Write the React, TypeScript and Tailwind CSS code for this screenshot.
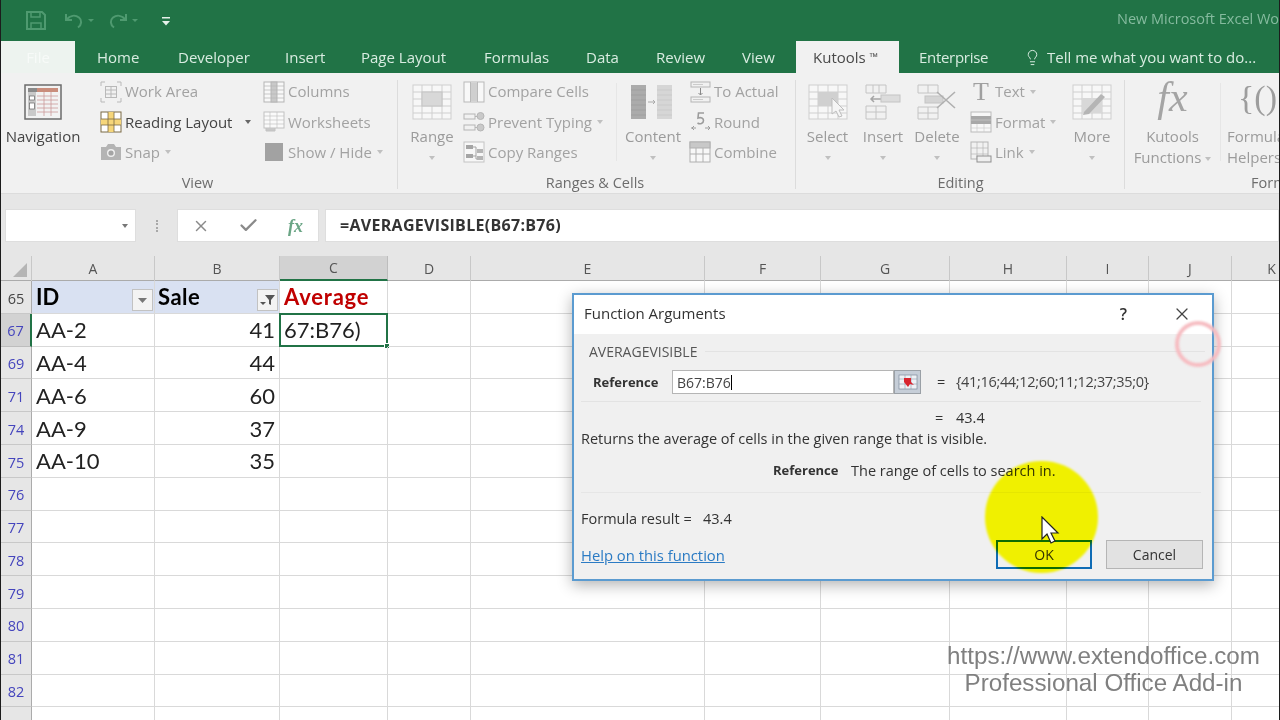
import type { ReactNode } from 'react';
import { Lightbulb, X, Check } from 'lucide-react';

const ui = { fontFamily: '"Open Sans", "Liberation Sans", sans-serif' };

const BigGrid = ({ children }: { children?: ReactNode }) => (
  <svg width="40" height="36" viewBox="0 0 40 36" fill="none" stroke="#cfcfcf" strokeWidth="1">
    <rect x="1" y="1" width="38" height="34" fill="#f7f7f7" />
    {[8, 15, 22, 29].map((y) => <line key={y} x1="1" x2="39" y1={y} y2={y} />)}
    {[10, 20, 30].map((x) => <line key={x} x1={x} x2={x} y1="1" y2="35" />)}
    {children}
  </svg>
);

const NavIcon = () => (
  <svg width="38" height="36" viewBox="0 0 38 36" fill="none">
    <rect x="1" y="1" width="36" height="34" fill="#f2f2f2" stroke="#6b6b6b" strokeWidth="1.5" />
    <rect x="4" y="4" width="8" height="28" fill="#c9c9c9" />
    <rect x="4" y="4" width="30" height="4" fill="#8a8a8a" />
    <rect x="13" y="4" width="21" height="4" fill="#c98d7c" />
    <rect x="5.5" y="12" width="5" height="4" fill="#fff" stroke="#666" strokeWidth=".7" />
    <rect x="5.5" y="19" width="5" height="6" fill="#fff" stroke="#666" strokeWidth=".7" />
    <g stroke="#c99" strokeWidth=".8">
      {[12, 16, 20, 24, 28].map((y) => <line key={y} x1="13" x2="34" y1={y} y2={y} />)}
      {[20, 27].map((x) => <line key={x} x1={x} x2={x} y1="8" y2="32" />)}
    </g>
  </svg>
);

const WorkAreaIcon = () => (
  <svg width="22" height="22" viewBox="0 0 22 22" fill="none" stroke="#b9b9b9">
    <path d="M1 5V1h4M17 1h4v4M1 17v4h4M21 17v4h-4" />
    <rect x="5.5" y="5.5" width="11" height="11" />
    <path d="M5.500 9h11M5.500 13h11M11 5.500v11" />
  </svg>
);

const ReadingIcon = () => (
  <svg width="22" height="22" viewBox="0 0 22 22" fill="none">
    <rect x="1" y="1" width="20" height="20" fill="#fff" stroke="#7b6a45" />
    <rect x="8" y="1" width="6" height="20" fill="#f6d67a" />
    <rect x="1" y="8" width="20" height="6" fill="#f6d67a" />
    <path d="M1 8h20M1 14h20M8 1v20M14 1v20" stroke="#7b6a45" strokeWidth=".8" />
  </svg>
);

const CameraIcon = () => (
  <svg width="22" height="18" viewBox="0 0 22 18">
    <path d="M1 4h5l2-3h6l2 3h5v13H1z" fill="#b4b4b4" />
    <circle cx="11" cy="10" r="4" fill="#f0f0f0" />
    <circle cx="11" cy="10" r="2.6" fill="#a4a4a4" />
  </svg>
);

const ColumnsIcon = () => (
  <svg width="22" height="22" viewBox="0 0 22 22" fill="none" stroke="#b5b5b5">
    <rect x="1" y="1" width="20" height="20" fill="#f8f8f8" />
    <rect x="8" y="1" width="6" height="20" fill="#c9c9c9" />
    <path d="M1 5h20M1 9h20M1 13h20M1 17h20" strokeWidth=".7" />
  </svg>
);

const WorksheetIcon = () => (
  <svg width="22" height="22" viewBox="0 0 22 22" fill="none" stroke="#c2c2c2">
    <rect x="1" y="1" width="20" height="16" fill="#fafafa" />
    <path d="M1 5h20M1 9h20M1 13h20M7 1v16M14 1v16" strokeWidth=".7" />
    <path d="M3 17v3h9v-3" fill="#c8c8c8" />
  </svg>
);

const CompareIcon = () => (
  <svg width="22" height="22" viewBox="0 0 22 22" fill="none" stroke="#b9b9b9">
    <rect x="1" y="1" width="20" height="20" fill="#f8f8f8" />
    <path d="M7.500 1v20M14.500 1v20" />
    <rect x="8" y="1.5" width="6" height="19" fill="#cfcfcf" stroke="none" />
  </svg>
);

const PreventIcon = () => (
  <svg width="22" height="22" viewBox="0 0 22 22" fill="none" stroke="#b5b5b5" strokeWidth="1">
    <rect x="1" y="3" width="11" height="5" />
    <rect x="1" y="14" width="11" height="5" />
    <path d="M12 5.500h4M12 16.500h4" />
    <circle cx="17.5" cy="5" r="3.5" fill="#c9c9c9" />
    <circle cx="17.5" cy="16.5" r="3.5" fill="#c9c9c9" />
  </svg>
);

const CopyIcon = () => (
  <svg width="22" height="22" viewBox="0 0 22 22" fill="none">
    <rect x="1" y="1" width="20" height="20" fill="#f7f7f7" stroke="#c4c4c4" />
    <rect x="3" y="4" width="7" height="4" fill="#a5a5a5" />
    <rect x="3" y="13" width="7" height="4" fill="#a5a5a5" />
    <rect x="14" y="8" width="6" height="4" fill="#b5b5b5" />
    <rect x="14" y="15" width="6" height="4" fill="#b5b5b5" />
    <path d="M10 6h3v12h1M10 15h3" stroke="#a5a5a5" />
  </svg>
);

const ContentIcon = () => (
  <svg width="44" height="36" viewBox="0 0 44 36">
    <rect x="0" y="1" width="15" height="34" fill="#ababab" />
    <rect x="26" y="1" width="15" height="34" fill="#d6d6d6" />
    <g stroke="#989898" strokeWidth=".6">
      {[6, 11, 16, 21, 26, 31].map((y) => <line key={y} x1="0" x2="15" y1={y} y2={y} />)}
    </g>
    <g stroke="#c2c2c2" strokeWidth=".6">
      {[6, 11, 16, 21, 26, 31].map((y) => <line key={y} x1="26" x2="41" y1={y} y2={y} />)}
    </g>
    <path d="M17 18h7m-2-2 2 2-2 2" stroke="#aaa" fill="none" />
  </svg>
);

const ToActualIcon = () => (
  <svg width="21" height="22" viewBox="0 0 21 22" fill="none" stroke="#b5b5b5">
    <rect x="1" y="1" width="19" height="5" />
    <rect x="1" y="16" width="19" height="5" />
    <path d="M10.500 7v7m-2-2 2 2 2-2" stroke="#888" />
    <path d="M3 3.500h10M3 18.500h10" stroke="#ccc" />
  </svg>
);

const RoundIcon = () => (
  <svg width="21" height="22" viewBox="0 0 21 22" fill="none" stroke="#9c9c9c">
    <path d="M1 17h5m-2-2-2 2 2 2M15 17h5m-2-2 2 2-2 2" />
    <path d="M14 2H8.500L8 7c3-1 5.500 0 5.500 2.500 0 3-3.500 4-6 2.500" strokeWidth="1.6" />
  </svg>
);

const CombineIcon = () => (
  <svg width="22" height="22" viewBox="0 0 22 22" fill="none" stroke="#b0b0b0">
    <rect x="1" y="1" width="20" height="20" fill="#f8f8f8" />
    <rect x="1" y="1" width="20" height="6" fill="#c8c8c8" />
    <path d="M1 13h20M7 7v14M14 7v14" />
  </svg>
);

const SelectIcon = () => (
  <BigGrid>
    <rect x="10" y="8" width="20" height="14" fill="#d0d0d0" stroke="none" />
    <path d="M24 14v16l4-3 3 6 3-1-3-6h5z" fill="#f5f5f5" stroke="#bdbdbd" />
  </BigGrid>
);

const RangeIcon = () => (
  <BigGrid>
    <rect x="10" y="8" width="20" height="14" fill="#d8d8d8" stroke="#c4c4c4" />
  </BigGrid>
);

const InsertIcon = () => (
  <svg width="36" height="36" viewBox="0 0 36 36" fill="none" stroke="#c4c4c4">
    <path d="M1 1h20v8H1zM8 1v8M14 1v8" />
    <path d="M1 22h20v13H1zM1 28h20M11 22v13" />
    <path d="M16 15H6m3-3-3 3 3 3" stroke="#a5a5a5" strokeWidth="1.5" />
    <rect x="16" y="11" width="19" height="7" fill="#dcdcdc" />
  </svg>
);

const DeleteIcon = () => (
  <svg width="40" height="36" viewBox="0 0 40 36" fill="none" stroke="#c4c4c4">
    <path d="M1 1h20v8H1zM11 1v8" />
    <rect x="8" y="12" width="18" height="7" fill="#d4d4d4" />
    <path d="M1 23h20v12H1zM1 29h20M11 23v12" />
    <path d="M20 24 38 8M20 8l18 16" stroke="#b0b0b0" strokeWidth="1.6" />
  </svg>
);

const FormatIcon = () => (
  <svg width="22" height="22" viewBox="0 0 22 22">
    <rect x="1" y="1" width="20" height="20" fill="#f7f7f7" stroke="#bbb" />
    <rect x="1" y="5" width="20" height="8" fill="#a8a8a8" />
    <path d="M1 9h20M1 17h20M7 13v8M14 13v8" stroke="#ccc" strokeWidth=".7" />
  </svg>
);

const LinkIcon = () => (
  <svg width="22" height="22" viewBox="0 0 22 22" fill="none" stroke="#b5b5b5">
    <rect x="1" y="1" width="17" height="17" />
    <path d="M1 7h17M1 13h17M7 1v17M13 1v17" strokeWidth=".7" />
    <rect x="7" y="15" width="14" height="6" fill="#efefef" stroke="#8f8f8f" />
  </svg>
);

const MoreIcon = () => (
  <BigGrid>
    <rect x="10" y="14" width="20" height="15" fill="#d8d8d8" stroke="none" />
    <path d="M12 28 29 10l4 3-16 17-6 1z" fill="#b5b5b5" stroke="none" />
  </BigGrid>
);

const Caret = ({ tone = '#c0c0c0' }: { tone?: string }) => (
  <svg width="6" height="4" viewBox="0 0 6 4" className="inline-block shrink-0"><path d="M0 0h6L3 4z" fill={tone} /></svg>
);

const BigBtn = ({ icon, label, caret, width, tone = 'text-[#9b9b9b]' }: { icon: ReactNode; label: ReactNode; caret?: boolean; width: string; tone?: string }) => (
  <div className={`${width} flex flex-col items-center shrink-0 pt-[10px] text-[15px] leading-[20px] ${tone}`}>
    <div className="h-[37px] flex items-center justify-center">{icon}</div>
    <div className="mt-[6px] text-center whitespace-nowrap">{label}</div>
    {caret && <div className="mt-[8px] flex h-[8px] items-center"><Caret /></div>}
  </div>
);

const SmallBtn = ({ icon, label, caret, dark, caretGap = 'ml-[2px]' }: { icon: ReactNode; label: string; caret?: boolean; dark?: boolean; caretGap?: string }) => (
  <div className={`h-[30.3px] flex items-center gap-[3px] text-[15px] whitespace-nowrap ${dark ? 'text-[#444]' : 'text-[#a2a2a2]'}`}>
    <div className="w-[22px] flex justify-center shrink-0">{icon}</div>
    <span>{label}</span>
    {caret && <span className={`${caretGap} flex`}><Caret tone={dark ? '#666' : '#c0c0c0'} /></span>}
  </div>
);

const SmallCol = ({ width, children }: { width: string; children: ReactNode }) => (
  <div className={`${width} shrink-0 pt-[3.5px]`}>{children}</div>
);

const SubSep = () => <div className="w-px h-[78px] mt-[10px] bg-[#e6e6e6] shrink-0" />;

const Group = ({ width, label, children, labelPad = 'pr-[4px]' }: { width: string; label: string; children: ReactNode; labelPad?: string }) => (
  <div className={`${width} shrink-0 h-[120px] flex flex-col relative`}>
    <div className="h-[100px] flex">{children}</div>
    <div className={`h-[20px] ${labelPad} text-center text-[14.5px] leading-[20px] text-[#6d6d6d]`}>{label}</div>
    <div className="absolute right-0 top-[7px] bottom-[4px] w-px bg-[#dcdcdc]" />
  </div>
);

const tabs = [
  { name: 'Home', w: 'w-[81px]' },
  { name: 'Developer', w: 'w-[107px]' },
  { name: 'Insert', w: 'w-[76px]' },
  { name: 'Page Layout', w: 'w-[123px]' },
  { name: 'Formulas', w: 'w-[102px]' },
  { name: 'Data', w: 'w-[70px]' },
  { name: 'Review', w: 'w-[86px]' },
  { name: 'View', w: 'w-[54px]' },
];

const columns = ['A', 'B', 'C', 'D', 'E', 'F', 'G', 'H', 'I', 'J', 'K'];
const gridCols = 'grid grid-cols-[31px_123px_125px_108px_83px_234px_116px_129px_117px_82px_83px_80px]';

const rows = [
  { n: '65', id: 'ID', sale: '', avg: 'Average' },
  { n: '67', id: 'AA-2', sale: '41', avg: '67:B76)' },
  { n: '69', id: 'AA-4', sale: '44' },
  { n: '71', id: 'AA-6', sale: '60' },
  { n: '74', id: 'AA-9', sale: '37' },
  { n: '75', id: 'AA-10', sale: '35' },
  { n: '76' }, { n: '77' }, { n: '78' }, { n: '79' }, { n: '80' }, { n: '81' }, { n: '82' }, { n: '83' },
] as { n: string; id?: string; sale?: string; avg?: string }[];

const FilterBtn = ({ active }: { active?: boolean }) => (
  <div className="absolute right-[1px] top-[8px] w-[21px] h-[22px] bg-[#f3f3f3] border border-[#c2c2c2] flex items-center justify-center">
    {active ? (
      <svg width="15" height="12" viewBox="0 0 15 12"><path d="M5 1h10L11 6v5l-2-1V6z" fill="#555" /><path d="M0 8h6L3 11z" fill="#555" /></svg>
    ) : (
      <svg width="9" height="5" viewBox="0 0 9 5"><path d="M0 0h9L4.500 5z" fill="#777" /></svg>
    )}
  </div>
);

const RefButton = () => (
  <div className="w-[27px] h-[24px] bg-[#c6ced8] border border-[#9aa0a6] flex items-center justify-center">
    <svg width="20" height="16" viewBox="0 0 20 16">
      <rect x="1" y="1" width="18" height="14" fill="#eef1f5" stroke="#7d8a9c" strokeWidth=".7" />
      <path d="M1 5h18M1 10h18M7 1v14M13 1v14" stroke="#8f9bad" strokeWidth=".6" />
      <path d="M6 4h7v4l3 3-4-1-2 3-4-5z" fill="#d9252f" />
    </svg>
  </div>
);

export default function App() {
  return (
    <div className="relative w-[1280px] h-[720px] overflow-hidden bg-white border-x border-[#1c1c1c] blur-[0.4px]" style={ui}>
      {/* title bar */}
      <div className="h-[41px] bg-[#217346] flex items-center">
        <svg width="20" height="19" viewBox="0 0 20 19" fill="none" stroke="#4f9a70" strokeWidth="2" className="ml-[25px]">
          <path d="M1 1h15l3 3v14H1z" />
          <path d="M5 1v5h9V1M5 18v-6h10v6" strokeWidth="1.5" />
        </svg>
        <svg width="18" height="16" viewBox="0 0 18 16" fill="none" stroke="#4f9a70" strokeWidth="2" className="ml-[19px]">
          <path d="M1 1v6h6M1.500 6.500C5 2.500 10 1.500 14 4.500c3 2.500 3 7-1 10" />
        </svg>
        <svg width="6" height="3" viewBox="0 0 6 3" className="ml-[5px]"><path d="M0 0h6L3 3z" fill="#4f9a70" /></svg>
        <svg width="18" height="16" viewBox="0 0 18 16" fill="none" stroke="#4f9a70" strokeWidth="2" className="ml-[15px]">
          <path d="M17 1v6h-6M16.500 6.500C13 2.500 8 1.500 4 4.500c-3 2.500-3 7 1 10" />
        </svg>
        <svg width="6" height="3" viewBox="0 0 6 3" className="ml-[5px]"><path d="M0 0h6L3 3z" fill="#4f9a70" /></svg>
        <svg width="8" height="10" viewBox="0 0 8 10" className="ml-[24px]">
          <path d="M0 1h8v1.500H0z" fill="#e6f1ea" />
          <path d="M0 5h8L4 9.500z" fill="#e6f1ea" />
        </svg>
        <span className="absolute left-[1116px] top-[8px] whitespace-nowrap text-[14.5px] text-[#86bb9f]">New Microsoft Excel Workbook</span>
      </div>

      {/* tabs */}
      <div className="h-[32px] bg-[#217346] flex items-end text-[15px] text-[#d9ece1]">
        <div className="w-[74px] h-[32px] bg-[#edf3ef] flex items-center justify-center text-[#f7faf8] shrink-0 mr-[22px]">File</div>
        {tabs.map((t) => (
          <div key={t.name} className={`${t.w} h-[32px] leading-[32px] shrink-0 whitespace-nowrap`}>{t.name}</div>
        ))}
        <div className="w-[103px] h-[32px] bg-[#f1f1f1] pl-[17px] leading-[32px] text-[#4a4a4a] shrink-0 whitespace-nowrap">Kutools <span className="text-[11px] align-top">™</span></div>
        <div className="ml-[20px] w-[105px] leading-[32px] shrink-0 tracking-[-0.3px]">Enterprise</div>
        <div className="h-[32px] flex items-center gap-[6px] whitespace-nowrap">
          <Lightbulb size={17} strokeWidth={1.4} />
          <span>Tell me what you want to do...</span>
        </div>
      </div>

      {/* ribbon */}
      <div className="h-[120px] bg-[#f1f1f1] flex overflow-hidden">
        <Group width="w-[397px]" label="View">
          <div className="pl-[4px] shrink-0 flex">
            <BigBtn width="w-[76px]" icon={<NavIcon />} label="Navigation" tone="text-[#444]" />
          </div>
          <div className="w-[19px] shrink-0" />
          <SmallCol width="w-[163px]">
            <SmallBtn icon={<WorkAreaIcon />} label="Work Area" />
            <SmallBtn icon={<ReadingIcon />} label="Reading Layout" dark caret caretGap="ml-[10px]" />
            <SmallBtn icon={<CameraIcon />} label="Snap" caret />
          </SmallCol>
          <SmallCol width="w-[130px]">
            <SmallBtn icon={<ColumnsIcon />} label="Columns" />
            <SmallBtn icon={<WorksheetIcon />} label="Worksheets" />
            <SmallBtn icon={<div className="w-[18px] h-[18px] bg-[#a2a2a2]" />} label="Show / Hide" caret />
          </SmallCol>
        </Group>

        <Group width="w-[398px]" label="Ranges & Cells">
          <div className="pl-[4px] shrink-0 flex">
            <BigBtn width="w-[60px]" icon={<RangeIcon />} label="Range" caret />
          </div>
          <div className="w-px shrink-0" />
          <SmallCol width="w-[153px]">
            <SmallBtn icon={<CompareIcon />} label="Compare Cells" />
            <SmallBtn icon={<PreventIcon />} label="Prevent Typing" caret />
            <SmallBtn icon={<CopyIcon />} label="Copy Ranges" />
          </SmallCol>
          <SubSep />
          <BigBtn width="w-[72px]" icon={<ContentIcon />} label="Content" caret />
          <SmallCol width="w-[100px]">
            <SmallBtn icon={<ToActualIcon />} label="To Actual" />
            <SmallBtn icon={<RoundIcon />} label="Round" />
            <SmallBtn icon={<CombineIcon />} label="Combine" />
          </SmallCol>
        </Group>

        <Group width="w-[329px]" label="Editing" labelPad="pr-0">
          <div className="pl-[4px] shrink-0 flex">
            <BigBtn width="w-[55px]" icon={<SelectIcon />} label="Select" caret />
          </div>
          <BigBtn width="w-[56px]" icon={<InsertIcon />} label="Insert" caret />
          <BigBtn width="w-[52px]" icon={<DeleteIcon />} label="Delete" caret />
          <div className="w-[7px] shrink-0" />
          <SmallCol width="w-[90px]">
            <SmallBtn icon={<span className="text-[26px] leading-none text-[#a0a0a0]" style={{ fontFamily: '"Liberation Serif", serif' }}>T</span>} label="Text" caret />
            <SmallBtn icon={<FormatIcon />} label="Format" caret />
            <SmallBtn icon={<LinkIcon />} label="Link" caret />
          </SmallCol>
          <BigBtn width="w-[64px]" icon={<MoreIcon />} label="More" caret />
        </Group>

        <div className="shrink-0 flex flex-col h-[120px] w-[200px]">
          <div className="h-[100px] flex">
            <div className="w-[95px] shrink-0 flex flex-col items-center pt-[4px] text-[15px] leading-[21px] text-[#9b9b9b]">
              <span className="h-[41px] text-[42px] leading-[41px] italic text-[#a4a4a4]" style={{ fontFamily: '"Liberation Serif", serif' }}>fx</span>
              <span className="mt-[8px]">Kutools</span>
              <span className="whitespace-nowrap">Functions <span className="inline-flex align-middle"><Caret /></span></span>
            </div>
            <SubSep />
            <div className="w-[72px] shrink-0 ml-[6px] flex flex-col pt-[4px] text-[15px] leading-[21px] text-[#9b9b9b] whitespace-nowrap">
              <span className="h-[41px] pl-[11px] text-[34px] leading-[41px] text-[#9d9d9d]" style={{ fontFamily: '"Liberation Serif", serif' }}>{'{()}'}</span>
              <span className="mt-[8px]">Formula</span>
              <span>Helpers</span>
            </div>
          </div>
          <div className="h-[20px] pl-[126px] text-[14.5px] leading-[20px] text-[#6d6d6d]">Formula</div>
        </div>
      </div>

      {/* formula bar */}
      <div className="h-[63px] bg-[#e6e6e6] border-t border-[#dcdcdc] pt-[15px]">
        <div className="flex h-[33px] items-stretch">
          <div className="ml-[4px] w-[131px] bg-white border border-[#dedede] flex items-center justify-end pr-[7px] shrink-0">
            <Caret tone="#777" />
          </div>
          <div className="w-[41px] flex items-center justify-center shrink-0">
            <div className="h-[12px] border-l-2 border-dotted border-[#a8a8a8]" />
          </div>
          <div className="w-[142px] bg-white border border-[#dedede] flex items-center shrink-0 pl-[14px]">
            <X size={18} strokeWidth={2} className="text-[#8a8a8a]" />
            <Check size={21} strokeWidth={2.6} className="text-[#8a8a8a] ml-[28px]" />
            <span className="ml-[29px] text-[18px] italic font-bold text-[#6aa585] leading-none" style={{ fontFamily: '"Liberation Serif", serif' }}>fx</span>
          </div>
          <div className="ml-[6px] flex-1 bg-white border border-[#dedede] flex items-center pl-[14px] pb-[1px] text-[16px] font-bold tracking-[0.3px] text-[#333]">
            =AVERAGEVISIBLE(B67:B76)
          </div>
        </div>
      </div>

      {/* sheet */}
      <div style={{ fontFamily: 'Lato, "Open Sans", sans-serif' }}>
        <div className={`${gridCols} h-[25px] bg-[#e6e6e6] border-b border-[#ababab] text-[14px] text-[#555] relative`} style={ui}>
          <div className="flex items-end justify-end border-r border-[#c8c8c8] pr-[4px] pb-[4px]">
            <svg width="14" height="14" viewBox="0 0 14 14"><path d="M14 0v14H0z" fill="#b5b5b5" /></svg>
          </div>
          {columns.map((c) => (
            <div
              key={c}
              className={c === 'C'
                ? 'flex items-center justify-center bg-[#d2d2d2] border-b-2 border-[#217346] h-[25px] border-r border-r-[#bdbdbd]'
                : 'flex items-center justify-center border-r border-[#c8c8c8] h-[25px]'}
            >
              {c}
            </div>
          ))}
        </div>

        {rows.map((r) => {
          const selected = r.n === '67';
          const header = r.n === '65';
          return (
            <div key={r.n} className={`${gridCols} h-[32.8px] text-[22px] text-[#222]`}>
              <div
                className={`flex items-center justify-center pt-[3px] text-[14.5px] border-b border-r ${selected ? 'bg-[#d2d2d2] border-b-[#bdbdbd] border-r-2 border-r-[#217346]' : 'bg-[#e6e6e6] border-b-[#c8c8c8] border-r-[#ababab]'} ${header ? 'text-[#444]' : 'text-[#4545bd]'}`}
                style={ui}
              >
                {r.n}
              </div>
              {columns.map((c) => {
                const base = 'relative border-b border-r border-[#d9d9d9] flex items-center leading-none pt-[1px]';
                if (c === 'A') {
                  return (
                    <div key={c} className={`${base} pl-[4px] ${header ? 'bg-[#d9e1f2] font-bold text-black' : ''}`}>
                      {r.id}
                      {header && <FilterBtn />}
                    </div>
                  );
                }
                if (c === 'B') {
                  return (
                    <div key={c} className={`${base} ${header ? 'bg-[#d9e1f2] font-bold text-black pl-[3px] tracking-[0.5px]' : 'justify-end pr-[4px]'}`}>
                      {header ? 'Sale' : r.sale}
                      {header && <FilterBtn active />}
                    </div>
                  );
                }
                if (c === 'C') {
                  return (
                    <div key={c} className={`${base} pl-[4px] ${header ? 'font-bold text-[#c00000] tracking-[0.8px]' : ''}`}>
                      {r.avg}
                      {selected && (
                        <div className="absolute -left-px -top-px right-[-1px] bottom-[-1px] border-2 border-[#217346]">
                          <div className="absolute right-[-4px] bottom-[-4px] w-[6px] h-[6px] bg-[#217346] border border-white" />
                        </div>
                      )}
                    </div>
                  );
                }
                return <div key={c} className={base} />;
              })}
            </div>
          );
        })}
      </div>

      {/* function arguments dialog */}
      <div className="absolute left-[571px] top-[293px] w-[642px] h-[288px] bg-[#f0f0f0] border-2 border-[#5b9bd0] shadow-[0_4px_14px_rgba(0,0,0,0.3)] flex flex-col text-[14.5px] text-[#333]">
        <div className="h-[39px] bg-white flex items-center justify-between shrink-0 pl-[10px] pb-[2px] text-[15px] text-[#333]">
          <span>Function Arguments</span>
          <div className="flex items-center">
            <span className="text-[16px] font-semibold mr-[45px]">?</span>
            <X size={20} strokeWidth={1.5} className="mr-[20px] text-[#444]" />
          </div>
        </div>

        <div className="px-[7px] flex-1 flex flex-col relative">
          <div className="flex items-center mt-[8px] h-[18px]">
            <span className="ml-[8px] mr-[8px] text-[14px] text-[#555]">AVERAGEVISIBLE</span>
            <div className="flex-1 h-px bg-[#e3e3e3]" />
          </div>
          <div className="flex items-center h-[24px] mt-[10px] ml-[12px]">
            <span className="w-[79px] pt-[1px] text-[13px] font-bold text-[#333]">Reference</span>
            <div className="w-[222px] h-[24px] bg-white border border-[#b5b5b5] flex items-center pl-[4px] pt-[1px] text-[14px] text-[#444]">
              B67:B76<span className="w-px h-[15px] bg-black" />
            </div>
            <RefButton />
            <span className="ml-[16px] w-[19px]">=</span>
            <span className="whitespace-nowrap text-[#444] tracking-[-0.33px]">{'{41;16;44;12;60;11;12;37;35;0}'}</span>
          </div>
          <div className="h-px bg-[#e3e3e3] mt-[7px] mr-[4px]" />
          <div className="h-[18px] mt-[7px] flex items-center pl-[354px]">
            <span className="w-[21px]">=</span>
            <span>43.4</span>
          </div>
          <div className="h-[20px] mt-[2px] flex items-center text-[#333] whitespace-nowrap">Returns the average of cells in the given range that is visible.</div>
          <div className="h-[20px] mt-[12px] flex items-center pl-[192px] whitespace-nowrap">
            <span className="font-bold text-[13px] w-[78px]">Reference</span>
            <span>The range of cells to search in.</span>
          </div>
          <div className="h-px bg-[#e6e6e6] mt-[11px] mr-[4px]" />
          <div className="h-[20px] mt-[16px] flex items-center">
            <span className="w-[122px]">Formula result =</span>
            <span>43.4</span>
          </div>
          <div className="flex items-center justify-between mt-[11px]">
            <span className="text-[14.8px] pt-[2px] text-[#2b7bc4] underline">Help on this function</span>
            <div className="flex gap-[14px] mr-[2px] text-[14px]">
              <div className="w-[96px] h-[29px] border-2 border-[#0f6cb5] flex items-center justify-center">OK</div>
              <div className="w-[97px] h-[29px] border border-[#b5b5b5] bg-[#e2e2e2] flex items-center justify-center">Cancel</div>
            </div>
          </div>
        </div>
      </div>

      {/* recording overlays */}
      <div className="absolute left-[984px] top-[461px] w-[113px] h-[112px] rounded-full bg-[#ffff00] mix-blend-multiply blur-[1px]" />
      <div className="absolute left-[1174px] top-[321px] w-[46px] h-[46px] rounded-full border-[4px] border-[#f6bcc1] blur-[1px]" />
      <svg width="20" height="28" viewBox="0 0 20 28" className="absolute left-[1039px] top-[516px]">
        <path d="M2 1v22l5-5 4 9 4-2-4-8h7z" fill="#fff" stroke="#222" strokeWidth="1.2" />
      </svg>

      {/* watermark */}
      <div className="absolute left-[945px] top-[642px] w-[315px] text-center text-[24.2px] leading-[27px] text-[#808080]" style={{ fontFamily: '"Liberation Sans", sans-serif' }}>
        <div className="whitespace-nowrap">https://www.extendoffice.com</div>
        <div className="whitespace-nowrap">Professional Office Add-in</div>
      </div>
    </div>
  );
}
